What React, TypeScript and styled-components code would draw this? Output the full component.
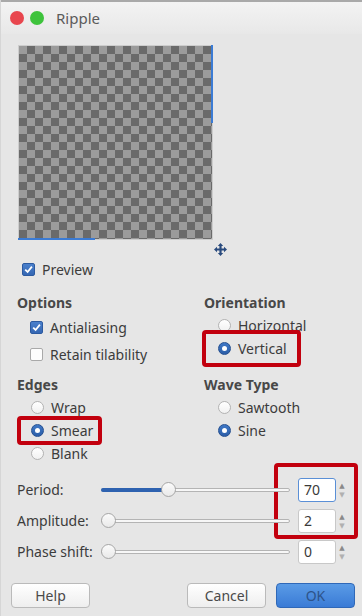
import React from 'react';
import styled, { createGlobalStyle, css } from 'styled-components';

const GlobalStyle = createGlobalStyle`
  html, body {
    margin: 0;
    padding: 0;
    background: #e6e6e6;
  }
  body {
    font-family: 'Noto Sans', 'DejaVu Sans', sans-serif;
    font-size: 14px;
    color: #3c3c3c;
  }
`;

const Window = styled.div`
  width: 362px;
  height: 616px;
  background: #e6e6e6;
  display: flex;
  flex-direction: column;
  box-sizing: border-box;
  border-left: 1px solid #d6d6d6;
  overflow: hidden;
`;

const TitleBar = styled.div`
  height: 34px;
  box-sizing: border-box;
  border-top: 2px solid #a9a9a9;
  background: linear-gradient(#f3f3f3, #e8e8e8);
  display: flex;
  align-items: center;
  padding-left: 9px;
  gap: 6px;
`;

const Dot = styled.span<{ $color: string }>`
  width: 14px;
  height: 14px;
  border-radius: 50%;
  background: ${(p) => p.$color};
`;

const Title = styled.span`
  margin-left: 6px;
  font-size: 15px;
  color: #5b5b5b;
`;

const Body = styled.div`
  padding: 0 0 0 16px;
  display: flex;
  flex-direction: column;
`;

const PreviewBlock = styled.div`
  margin-top: 11px;
  margin-left: 1px;
  display: flex;
  flex-direction: column;
`;

const PreviewCanvas = styled.div`
  position: relative;
  width: 195px;
  height: 195px;
  box-sizing: border-box;
  border: 1px solid #cdcdcd;
  background-color: #9b9b9b;
  background-image: conic-gradient(#6a6a6a 25%, #9b9b9b 0 50%, #6a6a6a 0 75%, #9b9b9b 0);
  background-size: 16px 16px;
  background-position: 0 0;
`;

const ScrollMark = styled.span<{ $side: 'right' | 'bottom' }>`
  position: absolute;
  background: #3b7bd4;
  ${(p) =>
    p.$side === 'right'
      ? css`
          right: -1px;
          top: -1px;
          width: 2px;
          height: 78px;
        `
      : css`
          left: -1px;
          bottom: -1px;
          height: 2px;
          width: 77px;
        `}
`;

const IconRow = styled.div`
  height: 14px;
  padding-left: 196px;
  padding-top: 2px;
  display: flex;
  align-items: center;
`;

const CheckRow = styled.label<{ $indent: number; $height: number }>`
  display: flex;
  align-items: center;
  gap: 7px;
  height: ${(p) => p.$height}px;
  padding-left: ${(p) => p.$indent}px;
`;

const Checkbox = styled.span<{ $checked?: boolean }>`
  width: 13px;
  height: 13px;
  box-sizing: border-box;
  border-radius: 2px;
  display: flex;
  align-items: center;
  justify-content: center;
  ${(p) =>
    p.$checked
      ? css`
          background: linear-gradient(#4a80cc, #3567b3);
          border: 1px solid #2c5aa0;
        `
      : css`
          background: #fdfdfd;
          border: 1px solid #a9a9a9;
        `}
`;

const Radio = styled.span<{ $checked?: boolean }>`
  width: 13px;
  height: 13px;
  box-sizing: border-box;
  border-radius: 50%;
  display: flex;
  align-items: center;
  justify-content: center;
  ${(p) =>
    p.$checked
      ? css`
          background: linear-gradient(#3f78c6, #2c5ea8);
          border: 1px solid #244f90;
          &::after {
            content: '';
            width: 5px;
            height: 5px;
            border-radius: 50%;
            background: #fff;
          }
        `
      : css`
          background: linear-gradient(#ffffff, #f1f1f1);
          border: 1px solid #b3b3b3;
        `}
`;

const Options = styled.div`
  display: grid;
  grid-template-columns: 187px 1fr;
  grid-template-rows: 78px auto;
  row-gap: 4px;
  margin-top: 7px;
`;

const Group = styled.div`
  display: flex;
  flex-direction: column;
`;

const Heading = styled.div`
  height: 24px;
  display: flex;
  align-items: center;
  font-weight: bold;
  color: #484848;
`;

const Highlight = styled.div<{ $box: [number, number, number, number] }>`
  position: relative;
  width: fit-content;
  &::after {
    content: '';
    position: absolute;
    top: ${(p) => p.$box[0]}px;
    right: ${(p) => p.$box[1]}px;
    bottom: ${(p) => p.$box[2]}px;
    left: ${(p) => p.$box[3]}px;
    border: 4px solid #c2000e;
    border-radius: 4px;
    pointer-events: none;
  }
`;

const Params = styled.div`
  position: relative;
  margin-top: 9px;
  display: flex;
  flex-direction: column;
`;

const SpinHighlight = styled.div`
  position: absolute;
  left: 257px;
  top: -11px;
  width: 84px;
  height: 76px;
  box-sizing: border-box;
  border: 4px solid #c2000e;
  border-radius: 4px;
  pointer-events: none;
`;

const ParamRow = styled.div`
  height: 31px;
  display: flex;
  align-items: center;
`;

const ParamLabel = styled.span`
  width: 84px;
  flex-shrink: 0;
  white-space: nowrap;
`;

const Track = styled.div`
  position: relative;
  width: 189px;
  height: 4px;
  box-sizing: border-box;
  border: 1px solid #b4b4b4;
  border-radius: 2px;
  background: #f7f7f7;
`;

const Fill = styled.div`
  position: absolute;
  left: -1px;
  top: -1px;
  height: 4px;
  border-radius: 2px;
  background: #2e62b0;
`;

const Knob = styled.span`
  position: absolute;
  top: 50%;
  width: 15px;
  height: 15px;
  margin-top: -7.5px;
  box-sizing: border-box;
  border-radius: 50%;
  border: 1px solid #a6a6a6;
  background: linear-gradient(#fbfbfb, #e9e9e9);
`;

const SpinWrap = styled.div`
  margin-left: 8px;
  display: flex;
  align-items: center;
  gap: 1px;
`;

const SpinField = styled.div<{ $focused?: boolean }>`
  width: 38px;
  height: 24px;
  box-sizing: border-box;
  border: 1px solid ${(p) => (p.$focused ? '#5a8fd6' : '#c8c8c8')};
  border-radius: 3px;
  background: #fff;
  display: flex;
  align-items: center;
  padding-left: 5px;
  font-size: 14px;
  color: #3a3a3a;
`;

const SpinArrows = styled.div`
  width: 10px;
  display: flex;
  flex-direction: column;
  align-items: center;
  font-size: 7px;
  line-height: 9px;
  color: #8a8a8a;
  span:last-child {
    color: #b0b0b0;
  }
`;

const ButtonRow = styled.div`
  margin-top: 16px;
  display: flex;
  padding: 0 7px 0 10px;
  gap: 10px;
`;

const Button = styled.button<{ $primary?: boolean }>`
  width: 79px;
  height: 25px;
  box-sizing: border-box;
  border-radius: 4px;
  font-family: inherit;
  font-size: 14px;
  display: flex;
  align-items: center;
  justify-content: center;
  ${(p) =>
    p.$primary
      ? css`
          border: 1px solid #2f68b8;
          background: linear-gradient(#5a9be6, #3a7bd6);
          color: #2d5389;
        `
      : css`
          border: 1px solid #bababa;
          background: linear-gradient(#ffffff, #eeeeee);
          color: #4a4a4a;
        `}
`;

const Spacer = styled.div`
  flex: 1;
`;

const CheckMark = () => (
  <svg width="9" height="9" viewBox="0 0 9 9">
    <path d="M1.2 4.6 L3.6 7 L7.9 1.6" fill="none" stroke="#fff" strokeWidth="1.8" />
  </svg>
);

const MoveIcon = () => (
  <svg width="13" height="13" viewBox="0 0 13 13">
    <path
      d="M6.5 0 L9.2 3 H7.6 V5.4 H10 V3.8 L13 6.5 L10 9.2 V7.6 H7.6 V10 H9.2 L6.5 13 L3.8 10 H5.4 V7.6 H3 V9.2 L0 6.5 L3 3.8 V5.4 H5.4 V3 H3.8 Z"
      fill="#2a4b7e"
    />
  </svg>
);

const CheckItem = ({ label, checked, indent }: { label: string; checked?: boolean; indent: number }) => (
  <CheckRow $indent={indent} $height={27}>
    <Checkbox $checked={checked}>{checked && <CheckMark />}</Checkbox>
    {label}
  </CheckRow>
);

const RadioItem = ({ label, checked }: { label: string; checked?: boolean }) => (
  <CheckRow $indent={14} $height={23}>
    <Radio $checked={checked} />
    {label}
  </CheckRow>
);

const Param = ({ label, value, pos, fill, focused }: { label: string; value: string; pos: number; fill?: boolean; focused?: boolean }) => (
  <ParamRow>
    <ParamLabel>{label}</ParamLabel>
    <Track>
      {fill && <Fill style={{ width: pos + 7 }} />}
      <Knob style={{ left: pos - 1 }} />
    </Track>
    <SpinWrap>
      <SpinField $focused={focused}>{value}</SpinField>
      <SpinArrows>
        <span>▲</span>
        <span>▼</span>
      </SpinArrows>
    </SpinWrap>
  </ParamRow>
);

export default function App() {
  return (
    <>
      <GlobalStyle />
      <Window>
        <TitleBar>
          <Dot $color="#e8464e" />
          <Dot $color="#3ec33c" />
          <Title>Ripple</Title>
        </TitleBar>
        <Body>
          <PreviewBlock>
            <PreviewCanvas>
              <ScrollMark $side="right" />
              <ScrollMark $side="bottom" />
            </PreviewCanvas>
            <IconRow>
              <MoveIcon />
            </IconRow>
            <CheckItem label="Preview" checked indent={4} />
          </PreviewBlock>

          <Options>
            <Group>
              <Heading>Options</Heading>
              <CheckItem label="Antialiasing" checked indent={13} />
              <CheckItem label="Retain tilability" indent={13} />
            </Group>
            <Group>
              <Heading>Orientation</Heading>
              <RadioItem label="Horizontal" />
              <Highlight $box={[-7, -14, -7, -2]}>
                <RadioItem label="Vertical" checked />
              </Highlight>
            </Group>
            <Group>
              <Heading>Edges</Heading>
              <RadioItem label="Wrap" />
              <Highlight $box={[-3, -9, -3, 0]}>
                <RadioItem label="Smear" checked />
              </Highlight>
              <RadioItem label="Blank" />
            </Group>
            <Group>
              <Heading>Wave Type</Heading>
              <RadioItem label="Sawtooth" />
              <RadioItem label="Sine" checked />
            </Group>
          </Options>

          <Params>
            <SpinHighlight />
            <Param label="Period:" value="70" pos={60} fill focused />
            <Param label="Amplitude:" value="2" pos={0} />
            <Param label="Phase shift:" value="0" pos={0} />
          </Params>
        </Body>
        <ButtonRow>
          <Button>Help</Button>
          <Spacer />
          <Button>Cancel</Button>
          <Button $primary>OK</Button>
        </ButtonRow>
      </Window>
    </>
  );
}
